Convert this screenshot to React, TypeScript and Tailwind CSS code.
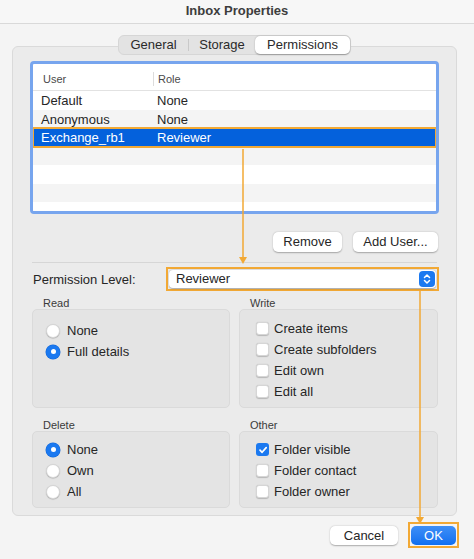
import React from "react";

const FONT = { fontFamily: '"Liberation Sans", Arial, sans-serif' };

const rows = [
  { user: "Default", role: "None" },
  { user: "Anonymous", role: "None" },
  { user: "Exchange_rb1", role: "Reviewer", selected: true },
  { user: "", role: "" },
  { user: "", role: "" },
  { user: "", role: "" },
  { user: "", role: "" },
];

function Radio({ label, checked }: { label: string; checked?: boolean }) {
  return (
    <div className="flex items-center h-[21px]">
      {checked ? (
        <div className="w-[14px] h-[14px] rounded-full bg-[#1b79f0] flex items-center justify-center shadow-[0_0_0_0.5px_#1467d6]">
          <div className="w-[5px] h-[5px] rounded-full bg-white" />
        </div>
      ) : (
        <div className="w-[14px] h-[14px] rounded-full bg-white shadow-[0_0.5px_1px_rgba(0,0,0,0.25)] border border-[#d6d6d6]" />
      )}
      <span className="ml-[7px] text-[13px] text-[#262626]">{label}</span>
    </div>
  );
}

function Check({ label, checked }: { label: string; checked?: boolean }) {
  return (
    <div className="flex items-center h-[21px]">
      {checked ? (
        <div className="w-[13px] h-[13px] rounded-[3px] bg-[#1b79f0] flex items-center justify-center">
          <svg width="10" height="10" viewBox="0 0 10 10">
            <path d="M2 5.2 L4.1 7.3 L8.2 2.6" fill="none" stroke="white" strokeWidth="1.7" strokeLinecap="round" strokeLinejoin="round" />
          </svg>
        </div>
      ) : (
        <div className="w-[13px] h-[13px] rounded-[3px] bg-white shadow-[0_0.5px_1px_rgba(0,0,0,0.2)] border border-[#d6d6d6]" />
      )}
      <span className="ml-[5px] text-[13px] text-[#262626]">{label}</span>
    </div>
  );
}

function Group({ title, children, className, boxClass }: { title: string; children: React.ReactNode; className?: string; boxClass: string }) {
  return (
    <div className={className}>
      <div className="h-[12px] leading-[12px] text-[11px] text-[#3a3a3a] pl-[11px]">{title}</div>
      <div className={"rounded-[5px] border border-[#dadada] bg-[#e4e4e4] " + boxClass}>{children}</div>
    </div>
  );
}

export default function App() {
  return (
    <div className="relative w-[474px] h-[559px] bg-[#f4f4f4] overflow-hidden" style={FONT}>
      {/* title bar */}
      <div className="h-[24px] border-b border-[#d9d9d9] bg-[#f7f7f7] flex justify-center pt-[1px] text-[13px] font-bold text-[#3d3d3d]">
        Inbox Properties
      </div>

      <div className="pl-[12px] pr-[17px] pt-[11px]">
        {/* tabs */}
        <div className="relative z-10 flex justify-center">
          <div className="flex h-[20px] rounded-[6px] bg-[#e3e3e3] border border-[#d6d6d6] text-[13px] text-[#2a2a2a]">
            <div className="w-[69px] flex items-center justify-center">General</div>
            <div className="w-px h-[12px] self-center bg-[#c9c9c9]" />
            <div className="w-[66px] flex items-center justify-center">Storage</div>
            <div className="w-[95px] flex items-center justify-center bg-white rounded-[5px] shadow-[0_0.5px_1.5px_rgba(0,0,0,0.3)]">
              Permissions
            </div>
          </div>
        </div>

        {/* panel */}
        <div className="-mt-[9px] h-[470px] rounded-[6px] border border-[#dadada] bg-[#ebebeb] px-[17px] pt-[14px]">
          {/* user table */}
          <div className="h-[153px] rounded-[4px] border-[3px] border-[#77a5ee] bg-white overflow-hidden">
            <div className="h-[27px] flex items-center pt-[4px] border-b border-[#e2e2e2] text-[11px] text-[#4a4a4a]">
              <div className="w-[120px] pl-[10px]">User</div>
              <div className="w-px h-[14px] bg-[#dcdcdc]" />
              <div className="pl-[4px]">Role</div>
            </div>
            {rows.map((r, i) => (
              <div
                key={i}
                className={
                  "h-[18.5px] flex items-center pt-[1px] text-[13px] " +
                  (r.selected
                    ? "bg-[#0461dc] text-white outline-2 outline-[#f2a935] -outline-offset-1 outline"
                    : i % 2 === 1
                    ? "bg-[#f4f4f4] text-[#262626]"
                    : "bg-white text-[#262626]")
                }
              >
                <div className="w-[121px] pl-[8px]">{r.user}</div>
                <div className="pl-[3px]">{r.role}</div>
              </div>
            ))}
          </div>

          {/* add / remove */}
          <div className="mt-[18px] flex justify-end gap-[11px] pr-[1px]">
            <button className="w-[69px] h-[20px] rounded-[5px] bg-white text-[13px] text-[#262626] shadow-[0_0.5px_1.5px_rgba(0,0,0,0.3)]">
              Remove
            </button>
            <button className="w-[85px] h-[20px] rounded-[5px] bg-white text-[13px] text-[#262626] shadow-[0_0.5px_1.5px_rgba(0,0,0,0.3)]">
              Add User...
            </button>
          </div>

          <div className="mt-[10px] mx-[2px] h-px bg-[#d6d6d6]" />

          {/* permission level */}
          <div className="mt-[4px] flex items-center h-[24px]">
            <div className="w-[136px] pl-[3px] pt-[1px] text-[13px] text-[#262626]">Permission Level:</div>
            <div className="w-[273px] h-[24px] border-2 border-[#f2a935] p-px">
              <div className="h-full rounded-[4px] bg-white shadow-[0_0.5px_1.5px_rgba(0,0,0,0.3)] flex items-center justify-between pl-[7px] pr-[1px]">
                <span className="text-[13px] text-[#262626]">Reviewer</span>
                <div className="w-[16px] h-[16px] rounded-[4px] bg-[#1b79f0] flex items-center justify-center">
                  <svg width="10" height="12" viewBox="0 0 10 12">
                    <path d="M2.5 4.5 L5 2 L7.5 4.5 M2.5 7.5 L5 10 L7.5 7.5" fill="none" stroke="white" strokeWidth="1.5" strokeLinecap="round" strokeLinejoin="round" />
                  </svg>
                </div>
              </div>
            </div>
          </div>

          {/* groups */}
          <div className="mt-[6px] px-[2px] grid grid-cols-[198px_199px] gap-x-[9px]">
            <Group title="Read" boxClass="h-[99px] pt-[10px] pl-[13px]">
              <Radio label="None" />
              <Radio label="Full details" checked />
            </Group>
            <Group title="Write" boxClass="h-[99px] pt-[8px] pl-[16px]">
              <Check label="Create items" />
              <Check label="Create subfolders" />
              <Check label="Edit own" />
              <Check label="Edit all" />
            </Group>
            <Group title="Delete" className="mt-[11px]" boxClass="h-[77px] pt-[7px] pl-[13px]">
              <Radio label="None" checked />
              <Radio label="Own" />
              <Radio label="All" />
            </Group>
            <Group title="Other" className="mt-[11px]" boxClass="h-[77px] pt-[7px] pl-[16px]">
              <Check label="Folder visible" checked />
              <Check label="Folder contact" />
              <Check label="Folder owner" />
            </Group>
          </div>
        </div>

        {/* footer buttons */}
        <div className="mt-[6px] -mr-[2px] flex justify-end items-center">
          <button className="w-[68px] h-[19px] rounded-[5px] bg-white text-[13px] text-[#262626] shadow-[0_0.5px_1.5px_rgba(0,0,0,0.3)]">
            Cancel
          </button>
          <div className="ml-[10px] w-[51px] h-[26px] border-2 border-[#f2a935] flex items-center justify-center">
            <button className="w-[45px] h-[19px] rounded-[5px] bg-gradient-to-b from-[#3d8ff7] to-[#0f6ff0] text-[13px] text-white">
              OK
            </button>
          </div>
        </div>
      </div>

      {/* annotation arrows */}
      <svg className="absolute inset-0 pointer-events-none" width="474" height="559">
        <line x1="243" y1="149" x2="243" y2="258" stroke="#f2a935" strokeWidth="1.5" />
        <polygon points="239,257 247,257 243,264" fill="#f2a935" />
        <line x1="420" y1="291" x2="420" y2="518" stroke="#f2a935" strokeWidth="1.5" />
        <polygon points="416,517 424,517 420,524" fill="#f2a935" />
      </svg>
    </div>
  );
}
